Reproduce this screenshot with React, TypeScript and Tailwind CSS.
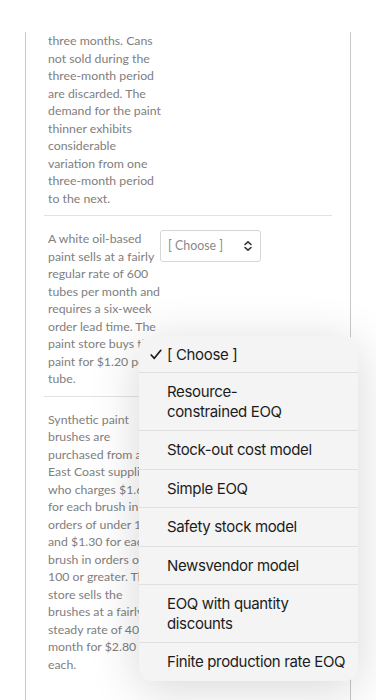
import React from "react";

const row1 = [
  "three months. Cans",
  "not sold during the",
  "three-month period",
  "are discarded. The",
  "demand for the paint",
  "thinner exhibits",
  "considerable",
  "variation from one",
  "three-month period",
  "to the next.",
];
const row2 = [
  "A white oil-based",
  "paint sells at a fairly",
  "regular rate of 600",
  "tubes per month and",
  "requires a six-week",
  "order lead time. The",
  "paint store buys the",
  "paint for $1.20 per",
  "tube.",
];
const row3 = [
  "Synthetic paint",
  "brushes are",
  "purchased from an",
  "East Coast supplier",
  "who charges $1.60",
  "for each brush in",
  "orders of under 100",
  "and $1.30 for each",
  "brush in orders of",
  "100 or greater. The",
  "store sells the",
  "brushes at a fairly",
  "steady rate of 40 per",
  "month for $2.80",
  "each.",
];

const options: { label: string[]; checked?: boolean }[] = [
  { label: ["[ Choose ]"], checked: true },
  { label: ["Resource-", "constrained EOQ"] },
  { label: ["Stock-out cost model"] },
  { label: ["Simple EOQ"] },
  { label: ["Safety stock model"] },
  { label: ["Newsvendor model"] },
  { label: ["EOQ with quantity", "discounts"] },
  { label: ["Finite production rate EOQ"] },
];

function Lines({ lines }: { lines: string[] }) {
  return (
    <div
      className="w-[116px] shrink-0 pl-[4px] text-[12.3px] leading-[17.5px] text-[#808080]"
      style={{ fontFamily: "Lato, 'Liberation Sans', sans-serif" }}
    >
      {lines.map((l, i) => (
        <div key={i} className="whitespace-nowrap">
          {l}
        </div>
      ))}
    </div>
  );
}

function Select() {
  return (
    <div
      className="flex h-[32px] w-[101px] shrink-0 items-center justify-between rounded-[3px] border border-[#d6d6d6] bg-white pl-[7px] pr-[7px] text-[12.4px] text-[#8a8a8a]"
      style={{ fontFamily: "Lato, 'Liberation Sans', sans-serif" }}
    >
      <span>[ Choose ]</span>
      <svg width="10" height="12" viewBox="0 0 10 12" fill="none" stroke="#333" strokeWidth="1.6" strokeLinecap="round" strokeLinejoin="round">
        <path d="M2 4.5 L5 1.8 L8 4.5" />
        <path d="M2 7.5 L5 10.2 L8 7.5" />
      </svg>
    </div>
  );
}

export default function App() {
  return (
    <div className="relative h-[700px] w-[376px] overflow-hidden bg-white">
      <div className="ml-[25px] mt-[32px] h-[668px] w-[326px] border-x border-[#c8c8c8] px-[18px]">
        <div className="flex border-b border-[#e2e2e2] pb-[8px]">
          <Lines lines={row1} />
        </div>
        <div className="flex border-b border-[#e2e2e2] pb-[8px] pt-[14px]">
          <Lines lines={row2} />
          <Select />
        </div>
        <div className="flex pb-[8px] pt-[14px]">
          <Lines lines={row3} />
        </div>
      </div>

      <div
        className="absolute left-[139px] top-[336px] w-[219px] overflow-hidden rounded-[13px] bg-[#f4f4f4] text-[15px] leading-[19.5px] tracking-[-0.35px] text-[#1c1c1c] shadow-[0_8px_50px_rgba(0,0,0,0.16)]"
        style={{ fontFamily: "Inter, 'Noto Sans', sans-serif" }}
      >
        {options.map((o, i) => (
          <div
            key={i}
            className={`relative pl-[28px] pr-[8px] ${i === 0 ? "pb-[8px] pt-[8.5px]" : "border-t border-[#e0e0e0] py-[9px]"}`}
          >
            {o.checked && (
              <svg className="absolute left-[11px] top-[13px]" width="12" height="11" viewBox="0 0 12 11" fill="none" stroke="#1c1c1c" strokeWidth="1.7" strokeLinecap="round" strokeLinejoin="round">
                <path d="M1.2 6 L4.3 9.3 L10.8 1.3" />
              </svg>
            )}
            {o.label.map((l, j) => (
              <div key={j} className="whitespace-nowrap">
                {l}
              </div>
            ))}
          </div>
        ))}
      </div>
    </div>
  );
}
